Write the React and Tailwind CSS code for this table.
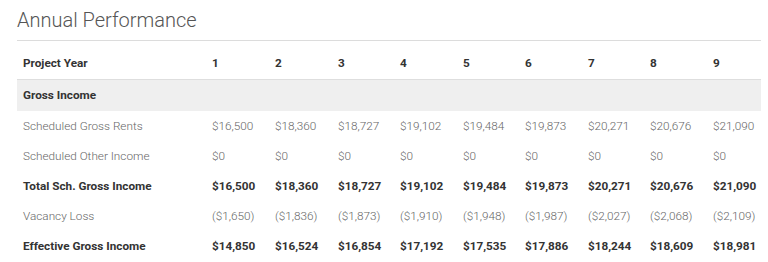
const years = [1, 2, 3, 4, 5, 6, 7, 8, 9]

const rows = [
  {
    label: 'Scheduled Gross Rents',
    bold: false,
    values: ['$16,500', '$18,360', '$18,727', '$19,102', '$19,484', '$19,873', '$20,271', '$20,676', '$21,090'],
  },
  {
    label: 'Scheduled Other Income',
    bold: false,
    values: ['$0', '$0', '$0', '$0', '$0', '$0', '$0', '$0', '$0'],
  },
  {
    label: 'Total Sch. Gross Income',
    bold: true,
    values: ['$16,500', '$18,360', '$18,727', '$19,102', '$19,484', '$19,873', '$20,271', '$20,676', '$21,090'],
  },
  {
    label: 'Vacancy Loss',
    bold: false,
    values: ['($1,650)', '($1,836)', '($1,873)', '($1,910)', '($1,948)', '($1,987)', '($2,027)', '($2,068)', '($2,109)'],
  },
  {
    label: 'Effective Gross Income',
    bold: true,
    values: ['$14,850', '$16,524', '$16,854', '$17,192', '$17,535', '$17,886', '$18,244', '$18,609', '$18,981'],
  },
]

const cols = 'grid grid-cols-[189px_63px_63px_62px_63px_62px_63px_62px_63px_1fr]'

function Row({ label, values, bold }) {
  const tone = bold ? 'font-bold text-[#333]' : 'font-light text-[#666]'
  return (
    <div className={`${cols} h-[30px] pt-[2px] items-center text-[11.75px] ${tone}`}>
      <div className="pl-[6px]">{label}</div>
      {values.map((v, i) => (
        <div key={i} className="pl-[6px] whitespace-nowrap">{v}</div>
      ))}
    </div>
  )
}

export default function App() {
  return (
    <div className="bg-white w-[768px] h-[262px] overflow-hidden px-[17px] pr-[7px]" style={{ fontFamily: 'Roboto, "Liberation Sans", sans-serif' }}>
      <h2 className="text-[20px] font-light text-[#555] leading-[24px] pt-[8px] pb-[8px]">Annual Performance</h2>
      <div className="border-t border-[#dcdcdc]">
        <div className={`${cols} h-[39px] items-end pb-[6px] text-[11.75px] font-bold text-[#333] border-b border-[#dedede]`}>
          <div className="pl-[6px]">Project Year</div>
          {years.map((y) => (
            <div key={y} className="pl-[6px]">{y}</div>
          ))}
        </div>
        <div className="bg-[#efefef] h-[31px] pt-[1px] flex items-center pl-[6px] text-[11.75px] font-bold text-[#333]">
          Gross Income
        </div>
        {rows.map((r) => (
          <Row key={r.label} {...r} />
        ))}
      </div>
    </div>
  )
}
